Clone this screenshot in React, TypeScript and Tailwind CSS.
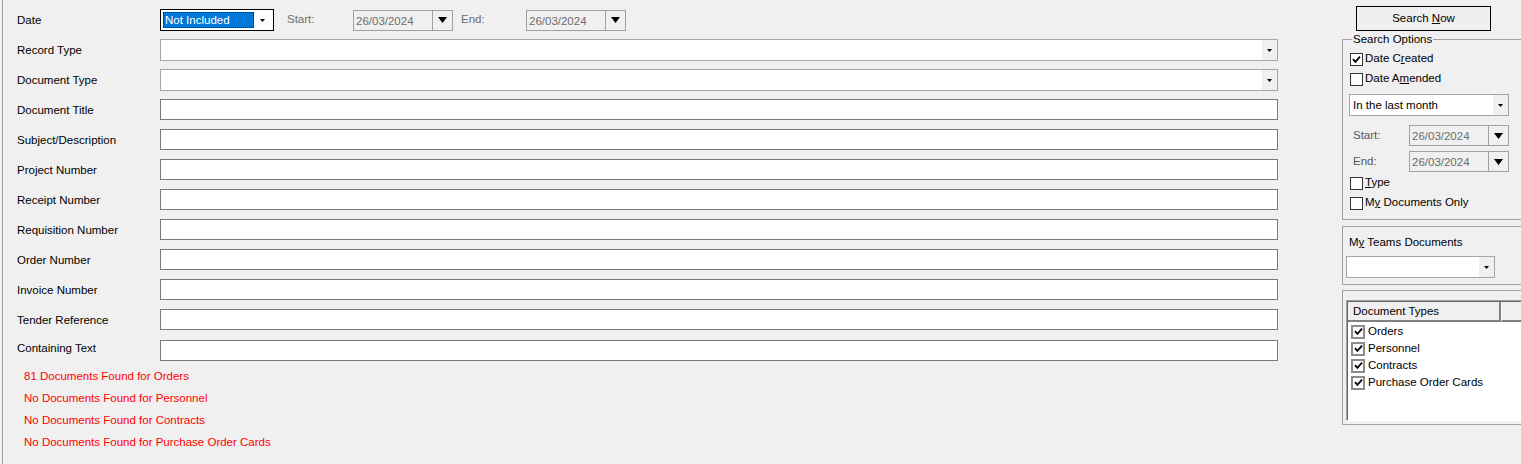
import React from 'react';

const labels = [
  'Record Type',
  'Document Type',
  'Document Title',
  'Subject/Description',
  'Project Number',
  'Receipt Number',
  'Requisition Number',
  'Order Number',
  'Invoice Number',
  'Tender Reference',
];

const results = [
  '81 Documents Found for Orders',
  'No Documents Found for Personnel',
  'No Documents Found for Contracts',
  'No Documents Found for Purchase Order Cards',
];

const docTypes = ['Orders', 'Personnel', 'Contracts', 'Purchase Order Cards'];

function SmallArrow() {
  return (
    <svg width="5" height="3" viewBox="0 0 5 3">
      <polygon points="0,0 5,0 2.5,3" fill="#000" />
    </svg>
  );
}

function BigArrow() {
  return (
    <svg width="9" height="6" viewBox="0 0 9 6">
      <polygon points="0,0 9,0 4.5,6" fill="#000" />
    </svg>
  );
}

function Tick() {
  return (
    <svg width="9" height="9" viewBox="0 0 9 9">
      <path d="M1 4.2 L3.4 6.8 L8 1.6" stroke="#000" strokeWidth="1.8" fill="none" />
    </svg>
  );
}

function CheckBox({ checked }: { checked?: boolean }) {
  return (
    <span className="w-[13px] h-[13px] border border-[#333] bg-white flex items-center justify-center flex-none">
      {checked && <Tick />}
    </span>
  );
}

function ListCheck() {
  return (
    <span className="w-[14px] h-[14px] border-2 border-[#8c8c8c] bg-white flex items-center justify-center flex-none">
      <Tick />
    </span>
  );
}

function DateBox({ width }: { width: string }) {
  return (
    <div className={`${width} h-[21px] border border-[#a0a0a0] bg-[#f0f0f0] flex`}>
      <span className="flex-1 pl-[2px] text-[#6d6d6d] leading-[20px]">26/03/2024</span>
      <span className="w-[20px] border-l border-[#a0a0a0] flex items-center justify-center">
        <BigArrow />
      </span>
    </div>
  );
}

function Combo({ width, text }: { width: string; text?: string }) {
  return (
    <div className={`${width} h-[22px] border border-[#a5a5a5] bg-white flex`}>
      <span className="flex-1 pl-[3px] leading-[21px]">{text}</span>
      <span className="w-[15px] bg-[#f0f0f0] flex items-center justify-center">
        <SmallArrow />
      </span>
    </div>
  );
}

export default function App() {
  return (
    <div className="w-[1521px] h-[464px] bg-[#f0f0f0] overflow-hidden flex font-['Liberation_Sans',Arial,sans-serif] text-[11.5px] text-black">
      {/* Search fields */}
      <div className="ml-[2px] w-[1340px] flex-none h-full border-l border-[#a0a0a0] pt-[5px]">
        <div className="h-[30px] flex items-center">
          <span className="w-[157px] pl-[14px] pt-[1px]">Date</span>
          <div className="w-[114px] h-[22px] border border-black bg-white flex p-[2px]">
            <span className="w-[91px] bg-[#0078d7] text-white border border-dotted border-[#222] leading-[15px] pl-[1px]">
              Not Included
            </span>
            <span className="flex-1 flex items-center justify-center">
              <SmallArrow />
            </span>
          </div>
          <span className="ml-[13px] w-[66px] text-[#6d6d6d]">Start:</span>
          <DateBox width="w-[100px]" />
          <span className="ml-[8px] w-[65px] text-[#6d6d6d]">End:</span>
          <DateBox width="w-[100px]" />
        </div>

        {labels.map((label, i) => (
          <div key={label} className="h-[30px] flex items-center">
            <span className="w-[157px] pl-[14px] pt-[2px]">{label}</span>
            {i < 2 ? (
              <Combo width="w-[1118px]" />
            ) : (
              <div className="w-[1118px] h-[21px] -mt-[1px] border border-[#7a7a7a] bg-white" />
            )}
          </div>
        ))}

        <div className="h-[30px] flex items-center">
          <span className="w-[157px] pl-[14px] pb-[3px]">Containing Text</span>
          <div className="w-[1118px] h-[21px] border border-[#7a7a7a] bg-white" />
        </div>

        <div className="pl-[21px] text-[#ff0000] leading-[22px]">
          {results.map((r) => (
            <div key={r}>{r}</div>
          ))}
        </div>
      </div>

      {/* Options panel */}
      <div className="w-[190px] flex-none">
        <button className="ml-[14px] mt-[6px] w-[135px] h-[25px] border border-black bg-[#efefef] flex items-center justify-center">
          <span>
            Search <u>N</u>ow
          </span>
        </button>

        <div className="relative mt-[8px] h-[181px] border border-[#a0a0a0]">
          <span className="absolute -top-[7px] left-[9px] px-[1px] bg-[#f0f0f0] leading-[13px]">Search Options</span>
          <div className="pt-[9px] pl-[7px]">
            <div className="h-[20px] flex items-center">
              <CheckBox checked />
              <span className="ml-[2px]">Date C<u>r</u>eated</span>
            </div>
            <div className="h-[20px] flex items-center">
              <CheckBox />
              <span className="ml-[2px]">Date A<u>m</u>ended</span>
            </div>
          </div>
          <div className="mt-[5px] ml-[6px]">
            <Combo width="w-[160px]" text="In the last month" />
          </div>
          <div className="mt-[9px] flex items-center">
            <span className="ml-[10px] w-[56px] text-[#555]">Start:</span>
            <DateBox width="w-[100px]" />
          </div>
          <div className="mt-[5px] flex items-center">
            <span className="ml-[10px] w-[56px] text-[#555]">End:</span>
            <DateBox width="w-[100px]" />
          </div>
          <div className="pl-[7px] pt-[1px]">
            <div className="h-[20px] flex items-center">
              <CheckBox />
              <span className="ml-[2px]"><u>T</u>ype</span>
            </div>
            <div className="h-[20px] flex items-center">
              <CheckBox />
              <span className="ml-[2px]">M<u>y</u> Documents Only</span>
            </div>
          </div>
        </div>

        <div className="mt-[6px] h-[59px] border border-[#a0a0a0]">
          <div className="mt-[7px] ml-[6px] leading-[16px]">M<u>y</u> Teams Documents</div>
          <div className="mt-[6px] ml-[3px]">
            <Combo width="w-[149px]" />
          </div>
        </div>

        <div className="mt-[5px] h-[135px] border border-[#a0a0a0]">
          <div className="mt-[9px] ml-[3px] h-[121px] border border-[#a0a0a0] border-r-0 border-b-white">
            <div className="h-full border-l border-t border-[#696969] bg-white">
              <div className="flex h-[20px] bg-[#f0f0f0]">
                <span className="w-[153px] border-r-2 border-b-2 border-[#808080] pl-[5px] leading-[19px]">
                  Document Types
                </span>
                <span className="flex-1 border-l border-white border-b-2 border-b-[#808080]" />
              </div>
              <div className="pt-[1px] pl-[3px]">
                {docTypes.map((d) => (
                  <div key={d} className="h-[17px] flex items-center">
                    <ListCheck />
                    <span className="ml-[3px]">{d}</span>
                  </div>
                ))}
              </div>
            </div>
          </div>
        </div>
      </div>
    </div>
  );
}
